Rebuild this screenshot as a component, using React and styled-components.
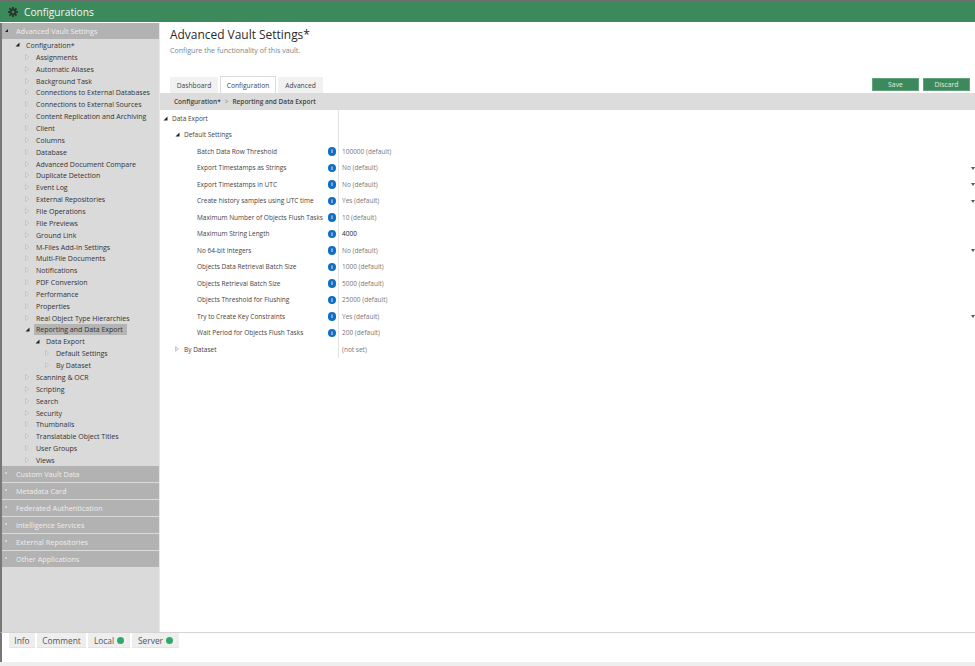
import React from "react";
import styled, { createGlobalStyle } from "styled-components";

const Global = createGlobalStyle`
  html, body { margin: 0; padding: 0; background: #fff; }
  body { font-family: "Open Sans", "Noto Sans", sans-serif; }
`;

const Page = styled.div`
  width: 975px; height: 666px; display: flex; flex-direction: column; overflow: hidden; background: #fff;
`;
const TitleBar = styled.header`
  height: 21px; flex: none; background: #3c8a5b; border-top: 1px solid #6f6f6f; display: flex; align-items: center;
  padding-left: 8px; gap: 6px; color: #f2f7f4; font-size: 10.2px; margin-bottom: 1px;
`;
const Body = styled.div`
  flex: none; height: 609px; display: flex; border-left: 2px solid #777;
`;
const Side = styled.nav`
  width: 157px; flex: none; background: #dadada; display: flex; flex-direction: column; border-right: 1px solid #e8e8e8;
`;
const AccHead = styled.div`
  height: 16px; flex: none; background: #b2b2b2; color: #eeeeee; font-size: 7.3px; display: flex; align-items: center;
  padding-left: 14px; margin-bottom: ${p => p.$mb || 0}px; position: relative;
`;
const AccMark = styled.span`
  position: absolute; left: 3px; top: 50%; margin-top: -2px;
  ${p => p.$open
    ? "border-right: 3px solid #222; border-top: 3px solid transparent; width: 0; height: 0;"
    : "background: #dedede; border-radius: 50%; width: 2px; height: 2px;"}
`;
const Tree = styled.div`
  flex: none; height: 427px;
`;
const Row = styled.div`
  height: 11.87px; display: flex; align-items: center; font-size: 7.03px; color: #333; white-space: nowrap;
  padding-left: ${p => p.$lv * 10 + 4}px;
`;
const Arrow = styled.span`
  width: 11px; margin-left: -1px; height: 8px; flex: none; display: inline-flex; align-items: center; justify-content: flex-start;
`;
const Label = styled.span`
  ${p => p.$sel ? "background: #b4b4b4; padding: 0 2px; margin-left: -2px; height: 11px; line-height: 11px; width: 89px;" : ""}
`;
const Main = styled.main`
  flex: 1; min-width: 0; display: flex; flex-direction: column;
`;
const Heading = styled.div`
  height: 53px; flex: none; padding: 3px 0 0 10px; box-sizing: border-box;
`;
const H1 = styled.h1`
  margin: 0; font-size: 11.95px; font-weight: 400; color: #2b2b2b; line-height: 18px;
`;
const Sub = styled.p`
  margin: 1px 0 0; font-size: 7.1px; color: #7a858a; line-height: 11px;
`;
const TabRow = styled.div`
  height: 17px; flex: none; display: flex; align-items: flex-end; padding-left: 10px; gap: 2px;
`;
const Tab = styled.div`
  height: ${p => p.$on ? 17 : 16}px; box-sizing: border-box; width: ${p => p.$w}px; font-size: 6.7px; color: #444; display: flex; align-items: center; justify-content: center;
  background: ${p => p.$on ? "#fff" : "#f1f1f1"};
  ${p => p.$on ? "border: 1px solid #dcdcdc; border-bottom: none;" : ""}
`;
const Actions = styled.div`
  margin-left: auto; display: flex; gap: 4px; padding-right: 5px; align-self: flex-start; margin-top: 2px;
`;
const Btn = styled.button`
  width: 47px; height: 13px; padding: 0; background: #3c8a5b; border: 1px solid #62a37c; color: #dfeee5; font: 6.9px "Open Sans", sans-serif; display: flex; align-items: center; justify-content: center;
`;
const Crumbs = styled.div`
  height: 17px; flex: none; background: #dcdcdc; display: flex; align-items: center; padding-left: 14px; font-size: 6.5px; color: #444; font-weight: 600; gap: 4px;
`;
const CrumbSep = styled.span`
  color: #888; font-weight: 400;
`;
const Grid = styled.div`
  flex: none; display: grid; grid-template-columns: 179px 1fr;
`;
const Prop = styled.div`
  height: 16.52px; display: flex; align-items: center; font-size: 6.5px; color: #444; white-space: nowrap;
  padding-left: ${p => p.$pad}px; box-sizing: border-box; position: relative;
`;
const NameCol = styled(Prop)`
  border-right: 1px solid #e2e2e2;
`;
const Info = styled.span`
  position: absolute; right: 2px; top: 50%; margin-top: -4.25px; width: 8.5px; height: 8.5px; border-radius: 50%; background: #0b6fc4; color: #cfe3f4;
  font: bold 6px "Liberation Serif", serif; display: flex; align-items: center; justify-content: center;
`;
const Value = styled(Prop)`
  padding-left: 3px; color: ${p => p.$strong ? "#222" : "#777"};
`;
const Caret = styled.span`
  position: absolute; right: 0; top: 50%; margin-top: -1px; width: 0; height: 0; border-left: 2.5px solid transparent; border-right: 2.5px solid transparent; border-top: 3px solid #555;
`;
const PropTree = styled.span`
  width: 9px; flex: none; display: inline-flex; align-items: center;
`;
const Footer = styled.footer`
  flex: 1; display: flex; flex-direction: column; border-left: 2px solid #777; border-top: 1px solid #d4d4d4; position: relative;
`;
const FootTabs = styled.div`
  display: flex; gap: 2px; padding-left: 7px; height: 15px;
`;
const FootTab = styled.div`
  background: #eeeeee; border-bottom: 1px solid #e4e4e4; box-sizing: border-box; height: 15px; width: ${p => p.$w}px; display: flex; align-items: center;
  justify-content: center; gap: 3px; font-size: 8.4px; color: #555;
`;
const Dot = styled.span`
  width: 7px; height: 7px; border-radius: 50%; background: #2eaa68;
`;
const FootStrip = styled.div`
  position: absolute; left: -2px; right: 0; bottom: 0; height: 4px; background: #eeeeee;
`;

const Open = () => (
  <svg width="5" height="5" viewBox="0 0 5 5"><path d="M4.5 0.5V4.5H0.5Z" fill="#222" /></svg>
);
const Closed = () => (
  <svg width="4" height="6" viewBox="0 0 4 6"><path d="M0.5 0.6L3.5 3L0.5 5.4Z" fill="#e4e4e4" stroke="#b4b4b4" strokeWidth=".6" /></svg>
);
const Gear = () => (
  <svg width="10" height="10" viewBox="0 0 10 10"><g fill="#28352d"><path d="M5 1.6a3.4 3.4 0 1 0 0 6.8 3.4 3.4 0 0 0 0-6.8Zm0 2a1.4 1.4 0 1 1 0 2.8 1.4 1.4 0 0 1 0-2.8Z" fillRule="evenodd" /><rect x="4.1" y="0" width="1.8" height="2" /><rect x="4.1" y="8" width="1.8" height="2" /><rect x="0" y="4.1" width="2" height="1.8" /><rect x="8" y="4.1" width="2" height="1.8" /><rect x="4.1" y="0" width="1.8" height="2" transform="rotate(45 5 5)" /><rect x="4.1" y="8" width="1.8" height="2" transform="rotate(45 5 5)" /><rect x="0" y="4.1" width="2" height="1.8" transform="rotate(45 5 5)" /><rect x="8" y="4.1" width="2" height="1.8" transform="rotate(45 5 5)" /></g></svg>
);

const before = ["Assignments","Automatic Aliases","Background Task","Connections to External Databases","Connections to External Sources","Content Replication and Archiving","Client","Columns","Database","Advanced Document Compare","Duplicate Detection","Event Log","External Repositories","File Operations","File Previews","Ground Link","M-Files Add-In Settings","Multi-File Documents","Notifications","PDF Conversion","Performance","Properties","Real Object Type Hierarchies"];
const after = ["Scanning & OCR","Scripting","Search","Security","Thumbnails","Translatable Object Titles","User Groups","Views"];
const groups = ["Custom Vault Data","Metadata Card","Federated Authentication","Intelligence Services","External Repositories","Other Applications"];
const props = [
  ["Batch Data Row Threshold","100000 (default)"],
  ["Export Timestamps as Strings","No (default)",1],
  ["Export Timestamps in UTC","No (default)",1],
  ["Create history samples using UTC time","Yes (default)",1],
  ["Maximum Number of Objects Flush Tasks","10 (default)"],
  ["Maximum String Length","4000",0,1],
  ["No 64-bit Integers","No (default)",1],
  ["Objects Data Retrieval Batch Size","1000 (default)"],
  ["Objects Retrieval Batch Size","5000 (default)"],
  ["Objects Threshold for Flushing","25000 (default)"],
  ["Try to Create Key Constraints","Yes (default)",1],
  ["Wait Period for Objects Flush Tasks","200 (default)"],
];

const TreeRow = ({ lv, open, sel, children }) => (
  <Row $lv={lv}>
    <Arrow>{open ? <Open /> : <Closed />}</Arrow>
    <Label $sel={sel}>{children}</Label>
  </Row>
);

export default function App() {
  return (
    <Page>
      <Global />
      <TitleBar><Gear />Configurations</TitleBar>
      <Body>
        <Side>
          <AccHead><AccMark $open />Advanced Vault Settings</AccHead>
          <Tree>
            <TreeRow lv={1} open>Configuration*</TreeRow>
            {before.map(t => <TreeRow key={t} lv={2}>{t}</TreeRow>)}
            <TreeRow lv={2} open sel>Reporting and Data Export</TreeRow>
            <TreeRow lv={3} open>Data Export</TreeRow>
            <TreeRow lv={4}>Default Settings</TreeRow>
            <TreeRow lv={4}>By Dataset</TreeRow>
            {after.map(t => <TreeRow key={t} lv={2}>{t}</TreeRow>)}
          </Tree>
          {groups.map(g => <AccHead key={g} $mb={1}><AccMark />{g}</AccHead>)}
        </Side>
        <Main>
          <Heading>
            <H1>Advanced Vault Settings*</H1>
            <Sub>Configure the functionality of this vault.</Sub>
          </Heading>
          <TabRow>
            <Tab $w={48}>Dashboard</Tab>
            <Tab $w={56} $on>Configuration</Tab>
            <Tab $w={45}>Advanced</Tab>
            <Actions><Btn>Save</Btn><Btn>Discard</Btn></Actions>
          </TabRow>
          <Crumbs>Configuration*<CrumbSep>&gt;</CrumbSep>Reporting and Data Export</Crumbs>
          <Grid>
            <NameCol $pad={3}><PropTree><Open /></PropTree>Data Export</NameCol><Value />
            <NameCol $pad={15}><PropTree><Open /></PropTree>Default Settings</NameCol><Value />
            {props.map(([n, v, c, s]) => (
              <React.Fragment key={n}>
                <NameCol $pad={37}>{n}<Info>i</Info></NameCol>
                <Value $strong={s}>{v}{c ? <Caret /> : null}</Value>
              </React.Fragment>
            ))}
            <NameCol $pad={15}><PropTree><Closed /></PropTree>By Dataset</NameCol><Value>(not set)</Value>
          </Grid>
        </Main>
      </Body>
      <Footer>
        <FootTabs>
          <FootTab $w={26}>Info</FootTab>
          <FootTab $w={49}>Comment</FootTab>
          <FootTab $w={42}>Local<Dot /></FootTab>
          <FootTab $w={47}>Server<Dot /></FootTab>
        </FootTabs>
        <FootStrip />
      </Footer>
    </Page>
  );
}
